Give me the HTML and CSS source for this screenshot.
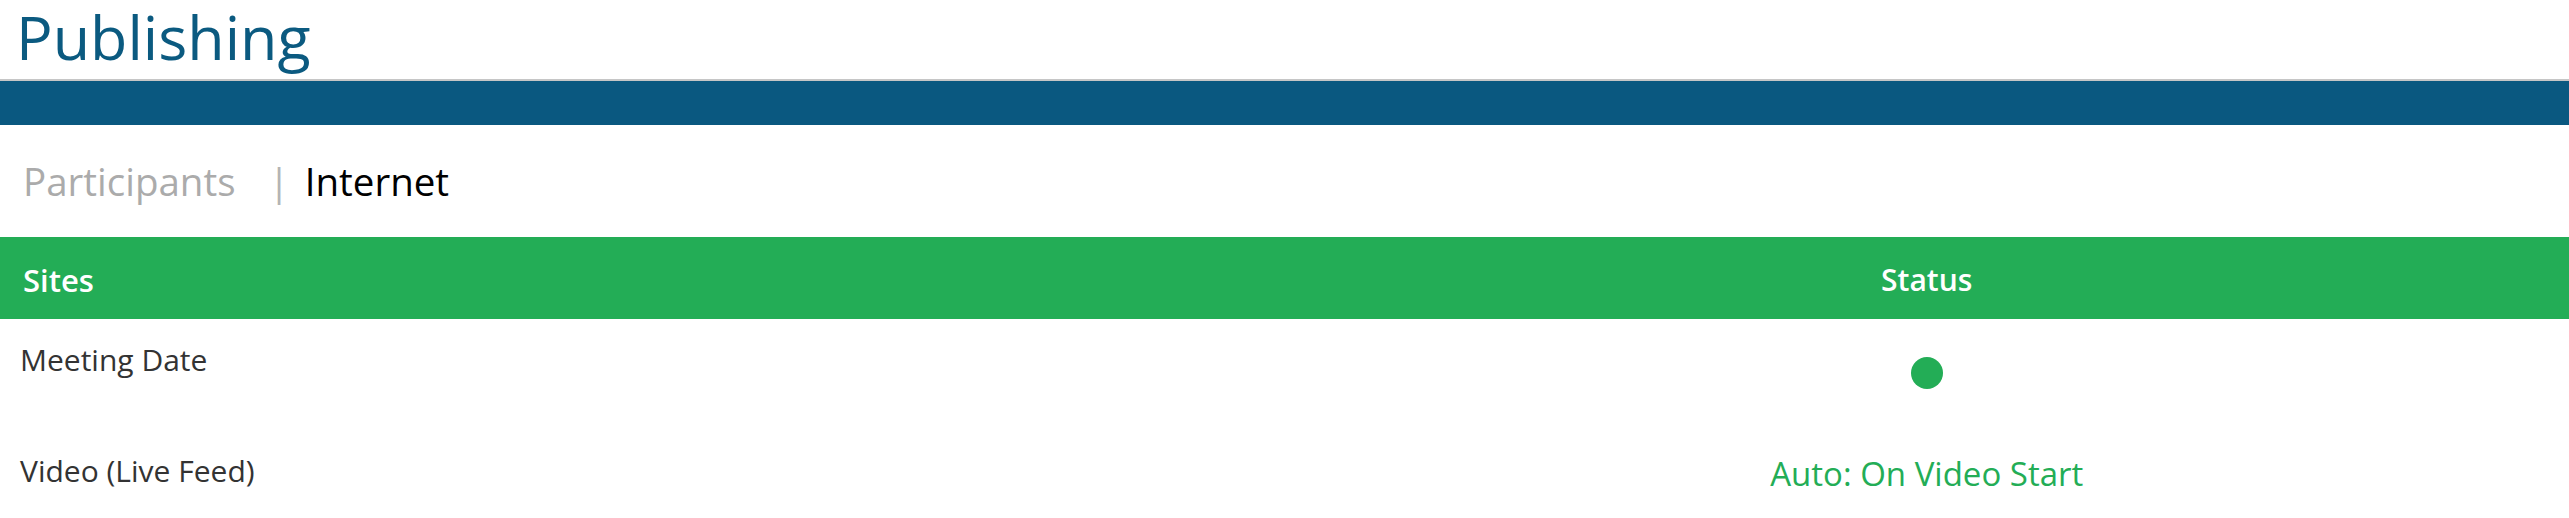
FILE: index.html
```html
<!DOCTYPE html>
<html lang="en">
<head>
<meta charset="utf-8">
<title>Publishing</title>
<link rel="stylesheet" href="styles.css">
</head>
<body>
<header class="page-head">
  <h1 class="page-title">Publishing</h1>
</header>
<div class="blue-bar"></div>
<nav class="tabs">
  <span class="tab">Participants</span>
  <span class="tab-sep">|</span>
  <span class="tab tab-active">Internet</span>
</nav>
<section class="grid">
  <div class="cell head head-left">Sites</div>
  <div class="cell head head-right">Status</div>
  <div class="cell body-left row-a">Meeting Date</div>
  <div class="cell body-right row-a"><span class="dot"></span></div>
  <div class="cell body-left row-b">Video (Live Feed)</div>
  <div class="cell body-right row-b status-text">Auto: On Video Start</div>
</section>
</body>
</html>
```
FILE: styles.css
```css
html, body {
  margin: 0;
  padding: 0;
  background: #ffffff;
}

body {
  font-family: "Open Sans", "Noto Sans", "Liberation Sans", sans-serif;
  color: #333333;
  width: 2569px;
}

.page-head {
  height: 79px;
  border-bottom: 2px solid #c6c6c6;
  box-sizing: content-box;
}

.page-title {
  margin: 0;
  padding: 0 0 6px 16px;
  font-size: 61px;
  font-weight: 400;
  line-height: 73px;
  color: #0b5a80;
}

.blue-bar {
  height: 44px;
  background: #0a5880;
}

.tabs {
  height: 112px;
  display: flex;
  align-items: center;
  padding-left: 23px;
  font-size: 38.5px;
  line-height: 50px;
}

.tab {
  color: #ababab;
}

.tab-sep {
  color: #b4b4b4;
  margin-left: 33px;
  margin-right: 15px;
}

.tab-active {
  color: #000000;
}

.grid {
  display: grid;
  grid-template-columns: 1fr 1fr;
  font-size: 30px;
  line-height: 42px;
}

.head {
  background: #23ad56;
  color: #ffffff;
  font-weight: 600;
  height: 82px;
  box-sizing: border-box;
  padding-top: 22px;
}

.head-left {
  padding-left: 23px;
  font-size: 31px;
}

.head-right {
  text-align: center;
}

.body-left {
  padding-left: 20px;
}

.body-right {
  text-align: center;
}

.row-a {
  height: 111px;
  box-sizing: border-box;
  padding-top: 20px;
}

.row-a.body-right {
  padding-top: 38px;
}

.row-b {
  padding-top: 20px;
}

.row-b.body-right {
  padding-top: 23px;
}

.dot {
  display: inline-block;
  width: 32px;
  height: 32px;
  border-radius: 50%;
  background: #23ad56;
  vertical-align: top;
}

.status-text {
  color: #23ad56;
  font-size: 33px;
}
```
